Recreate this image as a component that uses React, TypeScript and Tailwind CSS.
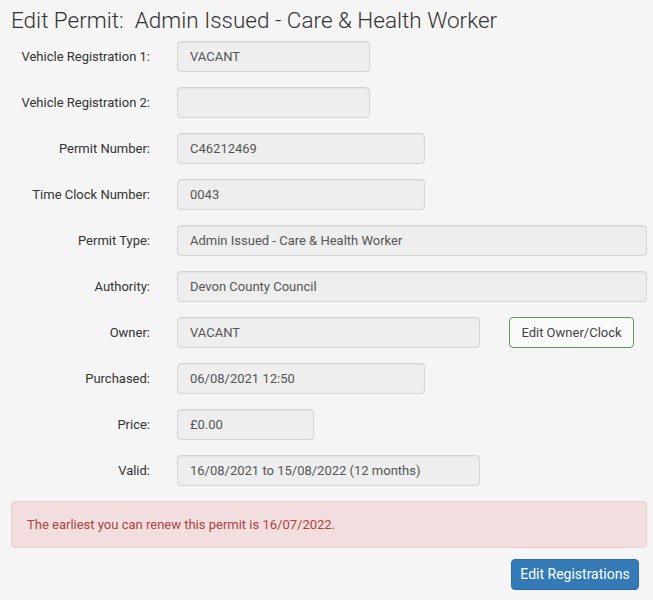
import React from "react";

type Row = { label: string; value: string; w: string; extra?: boolean };

const rows: Row[] = [
  { label: "Vehicle Registration 1:", value: "VACANT", w: "w-[193px]" },
  { label: "Vehicle Registration 2:", value: "", w: "w-[193px]" },
  { label: "Permit Number:", value: "C46212469", w: "w-[248px]" },
  { label: "Time Clock Number:", value: "0043", w: "w-[248px]" },
  { label: "Permit Type:", value: "Admin Issued - Care & Health Worker", w: "w-[470px]" },
  { label: "Authority:", value: "Devon County Council", w: "w-[470px]" },
  { label: "Owner:", value: "VACANT", w: "w-[303px]", extra: true },
  { label: "Purchased:", value: "06/08/2021 12:50", w: "w-[248px]" },
  { label: "Price:", value: "£0.00", w: "w-[137px]" },
  { label: "Valid:", value: "16/08/2021 to 15/08/2022 (12 months)", w: "w-[303px]" },
];

export default function App() {
  return (
    <div
      className="w-[653px] h-[600px] bg-[#f5f5f5] overflow-hidden text-[#333]"
      style={{ fontFamily: "Roboto, 'Liberation Sans', sans-serif" }}
    >
      <div className="pl-[11px] pr-[6px]">
        <h1 className="text-[22.5px] font-light leading-[40px] text-[#333]">
          Edit Permit:&nbsp; Admin Issued - Care &amp; Health Worker
        </h1>
        <div className="flex flex-col gap-[15px] mt-[1px]">
          {rows.map((r) => (
            <div key={r.label} className="flex items-center">
              <div className="w-[139px] shrink-0 text-right text-[13px] text-[#333]">{r.label}</div>
              <div
                className={`${r.w} shrink-0 ml-[27px] h-[31px] rounded-[4px] border border-[#d4d4d4] bg-[#eeeeee] px-[12px] flex items-center text-[13px] text-[#555] shadow-[inset_0_1px_1px_rgba(0,0,0,0.05)]`}
              >
                {r.value}
              </div>
              {r.extra && (
                <button className="ml-[29px] w-[125px] h-[31px] rounded-[4px] border border-[#5a9a5c] bg-[#fafafa] text-[13px] text-[#444]">
                  Edit Owner/Clock
                </button>
              )}
            </div>
          ))}
        </div>
        <div className="mt-[15px] h-[47px] rounded-[4px] border border-[#ebccd1] bg-[#f2dede] text-[#a94442] text-[13px] flex items-center px-[15px]">
          The earliest you can renew this permit is 16/07/2022.
        </div>
        <div className="flex justify-end pr-[8px] mt-[11px]">
          <button className="w-[128px] h-[31px] rounded-[4px] bg-[#337ab7] border border-[#2e6da4] text-white text-[14px]">
            Edit Registrations
          </button>
        </div>
      </div>
    </div>
  );
}
